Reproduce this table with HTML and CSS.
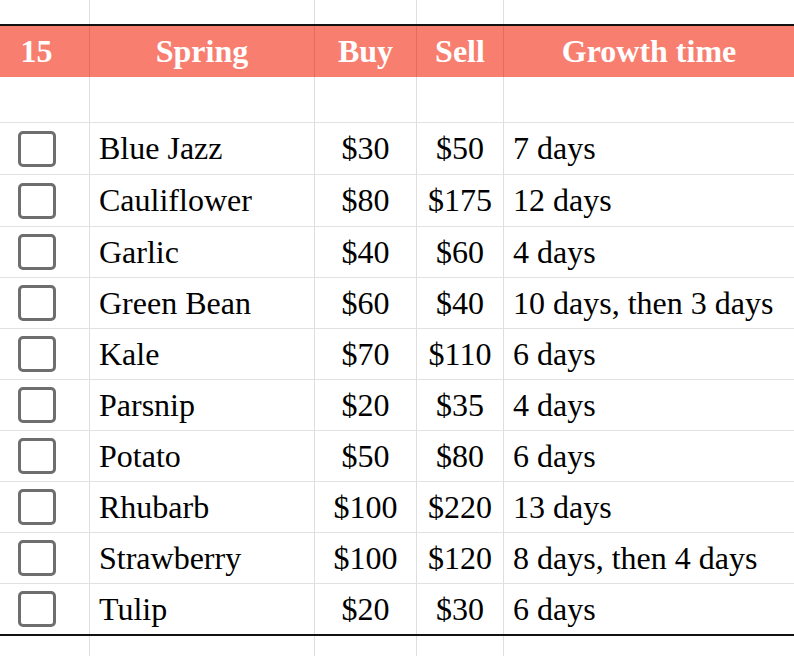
FILE: index.html
```html
<!DOCTYPE html>
<html>
<head>
<meta charset="utf-8">
<link rel="stylesheet" href="styles.css">
</head>
<body>
<div class="sheet">
  <div class="row edge"><div class="c"></div><div class="c"></div><div class="c"></div><div class="c"></div><div class="c"></div></div>
  <div class="row head">
    <div class="c chk">15</div>
    <div class="c mid">Spring</div>
    <div class="c mid">Buy</div>
    <div class="c mid">Sell</div>
    <div class="c mid">Growth time</div>
  </div>
  <div class="row blank"><div class="c"></div><div class="c"></div><div class="c"></div><div class="c"></div><div class="c"></div></div>

  <div class="row data tall"><div class="c chk"><span class="box"></span></div><div class="c name">Blue Jazz</div><div class="c mid">$30</div><div class="c mid">$50</div><div class="c name">7 days</div></div>
  <div class="row data tall"><div class="c chk"><span class="box"></span></div><div class="c name">Cauliflower</div><div class="c mid">$80</div><div class="c mid">$175</div><div class="c name">12 days</div></div>
  <div class="row data"><div class="c chk"><span class="box"></span></div><div class="c name">Garlic</div><div class="c mid">$40</div><div class="c mid">$60</div><div class="c name">4 days</div></div>
  <div class="row data"><div class="c chk"><span class="box"></span></div><div class="c name">Green Bean</div><div class="c mid">$60</div><div class="c mid">$40</div><div class="c name">10 days, then 3 days</div></div>
  <div class="row data"><div class="c chk"><span class="box"></span></div><div class="c name">Kale</div><div class="c mid">$70</div><div class="c mid">$110</div><div class="c name">6 days</div></div>
  <div class="row data"><div class="c chk"><span class="box"></span></div><div class="c name">Parsnip</div><div class="c mid">$20</div><div class="c mid">$35</div><div class="c name">4 days</div></div>
  <div class="row data"><div class="c chk"><span class="box"></span></div><div class="c name">Potato</div><div class="c mid">$50</div><div class="c mid">$80</div><div class="c name">6 days</div></div>
  <div class="row data"><div class="c chk"><span class="box"></span></div><div class="c name">Rhubarb</div><div class="c mid">$100</div><div class="c mid">$220</div><div class="c name">13 days</div></div>
  <div class="row data"><div class="c chk"><span class="box"></span></div><div class="c name">Strawberry</div><div class="c mid">$100</div><div class="c mid">$120</div><div class="c name">8 days, then 4 days</div></div>
  <div class="row data last"><div class="c chk"><span class="box"></span></div><div class="c name">Tulip</div><div class="c mid">$20</div><div class="c mid">$30</div><div class="c name">6 days</div></div>

  <div class="row edge foot"><div class="c"></div><div class="c"></div><div class="c"></div><div class="c"></div><div class="c"></div></div>
</div>
</body>
</html>
```

FILE: styles.css
```css
html, body {
  margin: 0;
  padding: 0;
  background: #ffffff;
}
.sheet {
  width: 794px;
  overflow: hidden;
  font-family: "Liberation Serif", "Times New Roman", serif;
  font-size: 32px;
  color: #000000;
}
.row {
  display: grid;
  grid-template-columns: 90px 225px 102px 87px 1fr;
  box-sizing: border-box;
  white-space: nowrap;
}
.c {
  box-sizing: border-box;
  border-right: 1px solid #dedede;
  display: flex;
  align-items: center;
  overflow: hidden;
}
.c:last-child {
  border-right: none;
}
.edge {
  height: 24px;
}
.edge.foot {
  height: 20px;
}
.head {
  height: 53px;
  border-top: 2px solid #111111;
  background: #f87e70;
  color: #ffffff;
  font-weight: bold;
}
.head .c {
  border-right-color: #e26e61;
}
.blank {
  height: 46px;
  border-bottom: 1px solid #e2e2e2;
}
.data {
  height: 51px;
  border-bottom: 1px solid #e2e2e2;
}
.data.tall {
  height: 52px;
}
.data.last {
  height: 52px;
  border-bottom: 2px solid #111111;
}
.chk {
  justify-content: center;
  padding-right: 16px;
}
.mid {
  justify-content: center;
}
.name {
  padding-left: 9px;
}
.box {
  width: 38px;
  height: 36px;
  box-sizing: border-box;
  border: 3px solid #6e6e6e;
  border-radius: 5px;
  background: #ffffff;
}
```
